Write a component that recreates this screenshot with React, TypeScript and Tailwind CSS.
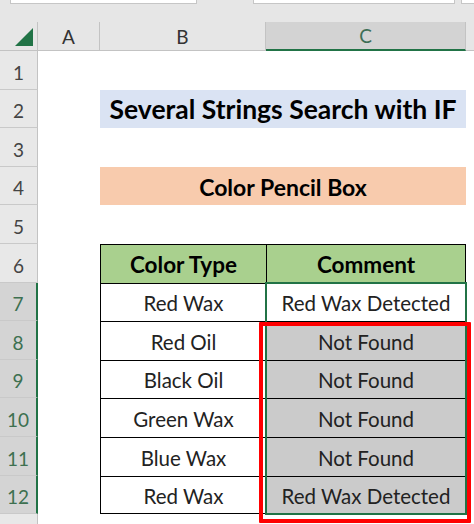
import React from 'react';

const ROW_HEIGHTS = [39, 38, 39, 38, 39, 39, 38, 39, 38, 39, 39, 38];

interface Item {
  type: string;
  comment: string;
}

const ITEMS: Item[] = [
  { type: 'Red Wax', comment: 'Red Wax Detected' },
  { type: 'Red Oil', comment: 'Not Found' },
  { type: 'Black Oil', comment: 'Not Found' },
  { type: 'Green Wax', comment: 'Not Found' },
  { type: 'Blue Wax', comment: 'Not Found' },
  { type: 'Red Wax', comment: 'Red Wax Detected' },
];

const RowHeader: React.FC<{ n: number; active?: boolean }> = ({ n, active }) => (
  <div
    className={
      'w-[38px] shrink-0 flex items-center justify-center border-b border-[#c9c9c9] text-[19px] ' +
      (active
        ? 'bg-[#d4d4d4] text-[#3d7050] border-r-2 border-r-[#217346]'
        : 'bg-[#e8e8e8] text-[#444] border-r border-r-[#c3c3c3]')
    }
  >
    <span className="pt-[6px]">{n}</span>
  </div>
);

export default function App() {
  const rows: React.ReactNode[] = [];

  ROW_HEIGHTS.forEach((h, i) => {
    const n = i + 1;
    let content: React.ReactNode = null;

    if (n === 2) {
      content = (
        <div className="w-[366px] flex items-center justify-center bg-[#dae3f3] text-[26.5px] font-bold text-black pt-[2px]">
          Several Strings Search with IF
        </div>
      );
    } else if (n === 4) {
      content = (
        <div className="w-[366px] flex items-center justify-center bg-[#f8cbad] text-[23px] font-bold text-black pt-[2px]">
          Color Pencil Box
        </div>
      );
    } else if (n === 6) {
      content = (
        <>
          <div className="w-[166px] flex items-center justify-center bg-[#a9d08e] border-l border-t border-black text-[22.5px] font-bold text-black pt-[2px]">
            Color Type
          </div>
          <div className="w-[200px] flex items-center justify-center bg-[#a9d08e] border-l border-r border-t border-black text-[22.5px] font-bold text-black pt-[2px]">
            Comment
          </div>
        </>
      );
    } else if (n >= 7) {
      const item = ITEMS[n - 7];
      const last = n === 12;
      content = (
        <>
          <div
            className={
              'w-[166px] flex items-center justify-center border-l border-t border-black text-[20.5px] text-[#222] pt-[2px] ' +
              (last ? 'border-b' : '')
            }
          >
            {item.type}
          </div>
          <div
            className={
              'w-[200px] flex items-center justify-center border-l border-r border-t border-black text-[20.5px] text-[#222] pt-[2px] ' +
              (n === 7 ? 'bg-white ' : 'bg-[#cbcbcb] ') +
              (last ? 'border-b' : '')
            }
          >
            {item.comment}
          </div>
        </>
      );
    }

    rows.push(
      <div key={n} className="flex" style={{ height: h }}>
        <RowHeader n={n} active={n >= 7} />
        <div className="w-[62px] shrink-0" />
        {content}
        <div className="flex-1" />
      </div>
    );
  });

  return (
    <div
      className="relative w-[474px] h-[524px] overflow-hidden bg-white"
      style={{ fontFamily: 'Lato, "Open Sans", sans-serif' }}
    >
      {/* formula bar strip */}
      <div className="h-[22px] bg-[#e6e6e6] flex">
        <div className="ml-[10px] w-[187px] h-[4px] bg-white border border-t-0 border-[#c6c6c6]" />
        <div className="ml-[56px] w-[202px] h-[4px] bg-white border border-t-0 border-[#c6c6c6]" />
        <div className="ml-[6px] flex-1 h-[4px] bg-white border border-t-0 border-r-0 border-[#c6c6c6]" />
      </div>

      {/* column headers */}
      <div className="flex h-[29px] bg-[#e6e6e6] text-[19px] text-[#333]">
        <div className="w-[38px] shrink-0 border-r border-b border-[#c3c3c3] relative">
          <svg className="absolute left-[15px] top-[6px]" width="18" height="18" viewBox="0 0 18 18">
            <polygon points="18,0 18,18 0,18" fill="#217346" />
          </svg>
        </div>
        <div className="w-[62px] shrink-0 flex items-center justify-center border-r border-b border-[#c3c3c3] pt-[2px]">A</div>
        <div className="w-[166px] shrink-0 flex items-center justify-center border-r border-b border-[#c3c3c3] pt-[2px]">B</div>
        <div className="w-[200px] shrink-0 flex items-center justify-center bg-[#d3d3d3] border-r border-[#c3c3c3] border-b-2 border-b-[#217346] text-[#3d6e55] pt-[2px]">
          C
        </div>
        <div className="flex-1 border-b border-[#c3c3c3]" />
      </div>

      {rows}

      {/* partial row 13 */}
      <div className="flex h-[10px]">
        <div className="w-[38px] bg-[#e8e8e8] border-r border-[#c3c3c3]" />
      </div>

      {/* selection outline C7:C12 */}
      <div className="absolute left-[265px] top-[282px] w-[202px] h-[233px] border-2 border-[#217346] pointer-events-none" />

      {/* red highlight box C8:C12 */}
      <div className="absolute left-[259px] top-[322px] w-[212px] h-[201px] border-[4px] border-[#ff0000] rounded-[1px] pointer-events-none" />
    </div>
  );
}
